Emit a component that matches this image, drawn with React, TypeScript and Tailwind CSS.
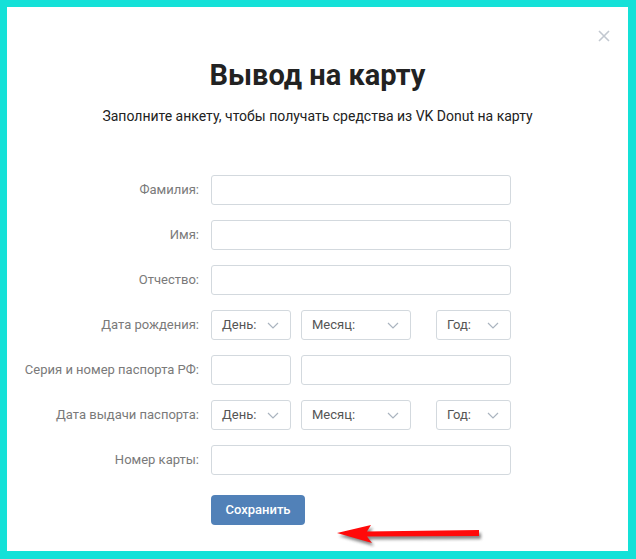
import React from 'react';

const font = { fontFamily: 'Roboto, "Noto Sans", sans-serif' };

function Chevron() {
  return (
    <svg width="12" height="7" viewBox="0 0 12 7" className="shrink-0">
      <path d="M1 1l5 5 5-5" fill="none" stroke="#aab4bf" strokeWidth="1.2" />
    </svg>
  );
}

function Select({ label, width }: { label: string; width: string }) {
  return (
    <div
      className={`${width} h-[30px] flex items-center justify-between pl-[10px] pr-[11px] border border-[#d3d9de] rounded-[3px] text-[13px] text-[#555]`}
    >
      <span>{label}</span>
      <Chevron />
    </div>
  );
}

function Input({ width }: { width: string }) {
  return <div className={`${width} h-[30px] border border-[#d3d9de] rounded-[3px] bg-white`} />;
}

function Row({ label, children }: { label: string; children: React.ReactNode }) {
  return (
    <div className="flex items-center h-[30px]">
      <div className="w-[192px] text-right text-[13px] text-[#7a7a7a] whitespace-nowrap">{label}</div>
      <div className="ml-[12px] flex items-center">{children}</div>
    </div>
  );
}

function DateRow({ label }: { label: string }) {
  return (
    <Row label={label}>
      <Select label="День:" width="w-[80px]" />
      <div className="ml-[10px]">
        <Select label="Месяц:" width="w-[110px]" />
      </div>
      <div className="ml-[25px]">
        <Select label="Год:" width="w-[75px]" />
      </div>
    </Row>
  );
}

export default function App() {
  return (
    <div className="w-[636px] h-[559px] bg-[#14e1d8] pt-[7px] pl-[7px] pr-[8px] pb-[8px]" style={font}>
      <div className="relative w-full h-full bg-white">
        {/* close */}
        <svg width="12" height="12" viewBox="0 0 12 12" className="absolute left-[591px] top-[23px]">
          <path d="M1 1l10 10M11 1L1 11" stroke="#c2c8d0" strokeWidth="1.6" />
        </svg>

        <h1 className="pt-[51px] text-center text-[29px] leading-[34px] font-bold text-[#222]">
          Вывод на карту
        </h1>
        <p className="mt-[16px] text-center text-[14px] leading-[17px] text-[#222]">
          Заполните анкету, чтобы получать средства из VK Donut на карту
        </p>

        <div className="mt-[50px] flex flex-col gap-[15px]">
          <Row label="Фамилия:">
            <Input width="w-[300px]" />
          </Row>
          <Row label="Имя:">
            <Input width="w-[300px]" />
          </Row>
          <Row label="Отчество:">
            <Input width="w-[300px]" />
          </Row>
          <DateRow label="Дата рождения:" />
          <Row label="Серия и номер паспорта РФ:">
            <Input width="w-[80px]" />
            <div className="ml-[10px]">
              <Input width="w-[210px]" />
            </div>
          </Row>
          <DateRow label="Дата выдачи паспорта:" />
          <Row label="Номер карты:">
            <Input width="w-[300px]" />
          </Row>
        </div>

        <div className="mt-[20px] pl-[204px]">
          <button className="w-[94px] h-[30px] rounded-[4px] bg-[#5181b8] text-white text-[13px] font-medium">
            Сохранить
          </button>
        </div>

        {/* red arrow annotation */}
        <svg width="160" height="40" viewBox="0 0 160 40" className="absolute left-[322px] top-[501px]">
          <defs>
            <filter id="sh" x="-20%" y="-50%" width="140%" height="200%">
              <feGaussianBlur stdDeviation="1.5" />
            </filter>
          </defs>
          <g transform="translate(2 3)" filter="url(#sh)" fill="#555" opacity="0.7">
            <path d="M8 25 L42 17 L38 23.5 L150 22 L150 28 L38 28.5 L43 35 Z" />
          </g>
          <path d="M8 25 L42 17 L38 23.5 L150 22 L150 28 L38 28.5 L43 35 Z" fill="#ff0a0a" />
        </svg>
      </div>
    </div>
  );
}
